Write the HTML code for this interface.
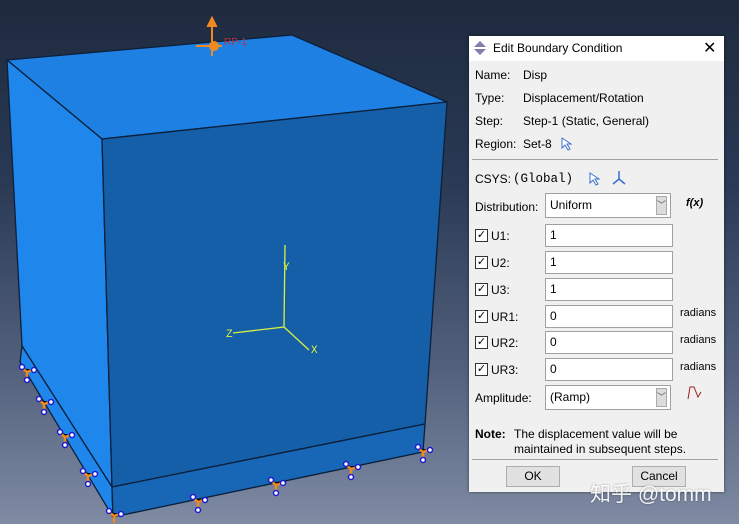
<!DOCTYPE html>
<html><head><meta charset="utf-8"><style>
body{margin:0;width:739px;height:524px;overflow:hidden;position:relative;background:linear-gradient(#1e2a3e 0%,#2a3a55 35%,#52607c 70%,#7f8ba3 100%);font-family:"Liberation Sans",sans-serif;}
.d{position:absolute;left:469px;top:36px;width:255px;height:456px;background:#f0f0f0;box-shadow:0 0 3px rgba(0,0,0,.5);font-size:12px;color:#000}
.a{position:absolute;white-space:nowrap}
.in{position:absolute;left:76px;width:128px;height:23px;line-height:21px;background:#fff;border:1px solid #a0a0a0;box-sizing:border-box;padding:0 0 0 4px}
.cb{position:absolute;left:6px;width:11px;height:11px;border:1px solid #333;background:#fff;font-size:11px;line-height:10px;text-align:center}
.btn{position:absolute;width:54px;height:21px;background:#e1e1e1;border:1px solid #adadad;box-sizing:border-box;text-align:center;line-height:19px}
.dd{position:absolute;right:3px;top:2px;width:11px;height:19px;background:#dcdcdc;border:1px solid #aaa;box-sizing:border-box;font-size:9px;text-align:center;line-height:16px;color:#555}
.bc circle{fill:#fff;stroke:#1a1ad0;stroke-width:1.5}
</style></head><body>
<svg width="739" height="524" style="position:absolute;left:0;top:0">
<g stroke="#0b1f3a" stroke-width="1.3" stroke-linejoin="round">
<polygon points="7,60 292,35 447,102 102,139" fill="#1e80e2"/>
<polygon points="7,60 102,139 112,487 22,346" fill="#1f86ec"/>
<polygon points="22,346 112,487 113,517 20,362" fill="#1f86ec"/>
<polygon points="102,139 447,102 425,424 112,487" fill="#155fa8"/>
<polygon points="112,487 425,424 423,452 113,517" fill="#1867b6"/>
</g>
<g stroke="#d8f040" stroke-width="1.3" fill="none"><path d="M285,245 L284,327 L233,333 M284,327 L309,350"/></g>
<g fill="#d8f040" font-family="Liberation Mono" font-size="11"><text x="283" y="270">Y</text><text x="226" y="337">Z</text><text x="311" y="353">X</text></g>
<g stroke="#f08a20" stroke-width="2" fill="#f08a20"><path d="M212,56 L212,22 M196,46 L222,46"/><polygon points="208,26 212,18 216,26"/><circle cx="214" cy="46" r="4"/></g>
<text x="224" y="45" fill="#c0303a" font-size="10">RP-1</text>
<g stroke="#f08a20" stroke-width="2.5" class="bc">
<g transform="translate(27,372)"><path d="M-5,-4 L0,0 L6,-2 M0,0 L0,7"/><circle cx="-5" cy="-5" r="2.5"/><circle cx="7" cy="-2" r="2.5"/><circle cx="0" cy="8" r="2.5"/></g>
<g transform="translate(44,404)"><path d="M-5,-4 L0,0 L6,-2 M0,0 L0,7"/><circle cx="-5" cy="-5" r="2.5"/><circle cx="7" cy="-2" r="2.5"/><circle cx="0" cy="8" r="2.5"/></g>
<g transform="translate(65,437)"><path d="M-5,-4 L0,0 L6,-2 M0,0 L0,7"/><circle cx="-5" cy="-5" r="2.5"/><circle cx="7" cy="-2" r="2.5"/><circle cx="0" cy="8" r="2.5"/></g>
<g transform="translate(88,476)"><path d="M-5,-4 L0,0 L6,-2 M0,0 L0,7"/><circle cx="-5" cy="-5" r="2.5"/><circle cx="7" cy="-2" r="2.5"/><circle cx="0" cy="8" r="2.5"/></g>
<g transform="translate(114,516)"><path d="M-5,-4 L0,0 L6,-2 M0,0 L0,7"/><circle cx="-5" cy="-5" r="2.5"/><circle cx="7" cy="-2" r="2.5"/></g>
<g transform="translate(198,502)"><path d="M-5,-4 L0,0 L6,-2 M0,0 L0,7"/><circle cx="-5" cy="-5" r="2.5"/><circle cx="7" cy="-2" r="2.5"/><circle cx="0" cy="8" r="2.5"/></g>
<g transform="translate(276,485)"><path d="M-5,-4 L0,0 L6,-2 M0,0 L0,7"/><circle cx="-5" cy="-5" r="2.5"/><circle cx="7" cy="-2" r="2.5"/><circle cx="0" cy="8" r="2.5"/></g>
<g transform="translate(351,469)"><path d="M-5,-4 L0,0 L6,-2 M0,0 L0,7"/><circle cx="-5" cy="-5" r="2.5"/><circle cx="7" cy="-2" r="2.5"/><circle cx="0" cy="8" r="2.5"/></g>
<g transform="translate(423,452)"><path d="M-5,-4 L0,0 L6,-2 M0,0 L0,7"/><circle cx="-5" cy="-5" r="2.5"/><circle cx="7" cy="-2" r="2.5"/><circle cx="0" cy="8" r="2.5"/></g>
</g>
</svg>
<div class="d">
<div style="position:absolute;left:0;top:0;width:255px;height:25px;background:#fff"></div>
<svg class="a" style="left:4px;top:5px" width="14" height="14"><polygon points="7,0 13,6 1,6" fill="#8080b0"/><polygon points="7,14 13,8 1,8" fill="#8080b0"/></svg>
<div class="a" style="left:24px;top:5px">Edit Boundary Condition</div>
<div class="a" style="left:234px;top:2px;font-size:16px">✕</div>
<div class="a" style="left:6px;top:32px">Name:</div><div class="a" style="left:54px;top:32px">Disp</div>
<div class="a" style="left:6px;top:55px">Type:</div><div class="a" style="left:54px;top:55px">Displacement/Rotation</div>
<div class="a" style="left:6px;top:78px">Step:</div><div class="a" style="left:54px;top:78px">Step-1 (Static, General)</div>
<div class="a" style="left:6px;top:101px">Region:</div><div class="a" style="left:54px;top:101px">Set-8</div>
<svg class="a" style="left:92px;top:101px" width="12" height="14"><path d="M1,1 L1,11 L4,8 L7,13 L9,12 L6,7 L10,7 Z" fill="#fff" stroke="#3a70d0"/></svg>
<div class="a" style="left:3px;top:123px;width:246px;height:1px;background:#a0a0a0"></div>
<div class="a" style="left:6px;top:136px">CSYS:</div><div class="a" style="left:44px;top:136px;font-family:'Liberation Mono';font-size:12.5px">(Global)</div>
<svg class="a" style="left:120px;top:136px" width="12" height="14"><path d="M1,1 L1,11 L4,8 L7,13 L9,12 L6,7 L10,7 Z" fill="#fff" stroke="#3a70d0"/></svg>
<svg class="a" style="left:143px;top:134px" width="14" height="16"><path d="M7,1 L7,9 L1,14 M7,9 L13,14" stroke="#3a70d0" stroke-width="1.5" fill="none"/></svg>
<div class="a" style="left:6px;top:164px">Distribution:</div>
<div class="in" style="top:157px;height:25px;line-height:23px;width:126px">Uniform<div class="dd">﹀</div></div>
<div class="a" style="left:217px;top:161px;font-style:italic;font-weight:bold;font-size:11px">f(x)</div>
<div class="cb" style="top:193px">✓</div><div class="a" style="left:22px;top:193px">U1:</div><div class="in" style="top:188px">1</div>
<div class="cb" style="top:220px">✓</div><div class="a" style="left:22px;top:220px">U2:</div><div class="in" style="top:215px">1</div>
<div class="cb" style="top:247px">✓</div><div class="a" style="left:22px;top:247px">U3:</div><div class="in" style="top:242px">1</div>
<div class="cb" style="top:274px">✓</div><div class="a" style="left:22px;top:274px">UR1:</div><div class="in" style="top:269px">0</div><div class="a" style="left:211px;top:271px;font-size:11px">radians</div>
<div class="cb" style="top:300px">✓</div><div class="a" style="left:22px;top:300px">UR2:</div><div class="in" style="top:295px">0</div><div class="a" style="left:211px;top:298px;font-size:11px">radians</div>
<div class="cb" style="top:327px">✓</div><div class="a" style="left:22px;top:327px">UR3:</div><div class="in" style="top:322px">0</div><div class="a" style="left:211px;top:325px;font-size:11px">radians</div>
<div class="a" style="left:6px;top:355px">Amplitude:</div>
<div class="in" style="top:349px;height:25px;line-height:23px;width:126px">(Ramp)<div class="dd">﹀</div></div>
<svg class="a" style="left:217px;top:349px" width="18" height="16"><path d="M2,14 L4,2 L8,2 L12,12 L15,7" stroke="#a02020" fill="none"/></svg>
<div class="a" style="left:6px;top:391px"><b>Note:</b></div>
<div class="a" style="left:45px;top:391px;line-height:15px">The displacement value will be<br>maintained in subsequent steps.</div>
<div class="a" style="left:3px;top:423px;width:246px;height:1px;background:#a0a0a0"></div>
<div class="btn" style="left:37px;top:430px">OK</div>
<div class="btn" style="left:163px;top:430px">Cancel</div>
</div>
<div class="a" style="left:590px;top:478px;color:#fff;font-size:21px;font-family:'Liberation Sans','Noto Sans CJK SC',sans-serif;opacity:.9;text-shadow:0 0 2px rgba(0,0,0,.4)">知乎 @tomm</div>
</body></html>
